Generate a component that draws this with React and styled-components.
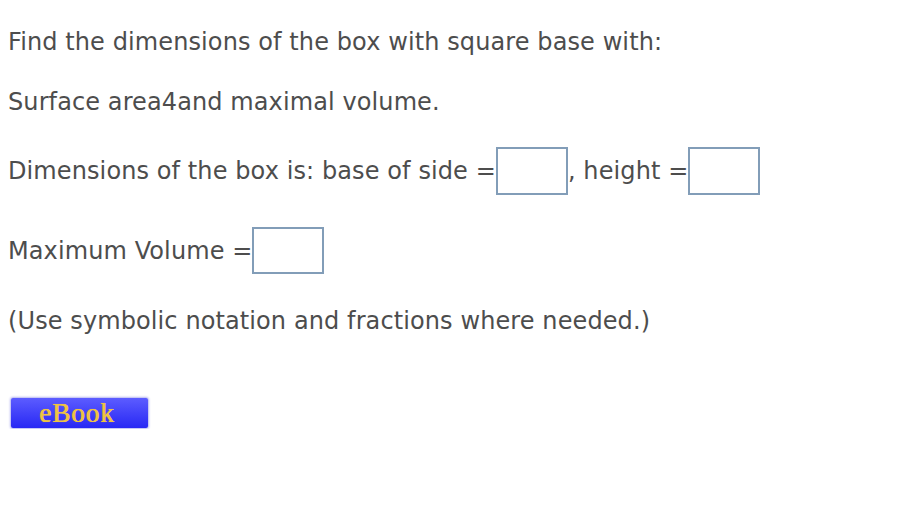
import React from 'react';
import styled, { createGlobalStyle } from 'styled-components';

const GlobalStyle = createGlobalStyle`
    body {
        margin: 0;
        background: #ffffff;
    }
`

const Page = styled.div`
    display: flex;
    flex-direction: column;
    align-items: flex-start;
    padding: 30px 0 0 8px;
    font-family: "DejaVu Sans", Verdana, sans-serif;
    font-size: 24px;
    letter-spacing: 0.1px;
    color: #4d4d4d;
`

const Line = styled.div`
    display: flex;
    align-items: center;
    line-height: 24px;
    margin-top: ${({mt}) => mt || '0'};
    white-space: pre;
`

const AnswerBox = styled.input`
    box-sizing: border-box;
    width: 72px;
    height: ${({h}) => h || '48px'};
    border: 2px solid #829db8;
    background: #fff;
    margin: 0;
    padding: 0 4px;
    font: inherit;
    outline: none;
`

const EBook = styled.button`
    margin: 64px 0 0 2px;
    width: 139px;
    height: 32px;
    border: 1px solid #c8c8f4;
    border-radius: 3px;
    background: linear-gradient(to bottom, #5c5cff, #2828f4);
    box-shadow: 0 0 2px rgba(80, 80, 220, 0.45);
    color: #ecc444;
    font-family: "Liberation Serif", "Times New Roman", serif;
    font-size: 27px;
    letter-spacing: 1px;
    text-shadow: 0 0 0.7px #ecc444, 0.4px 0 0 #ecc444;
    line-height: 28px;
    padding: 0 5px 0 0;
    cursor: pointer;
`

const App = () => {
    return (
        <>
            <GlobalStyle />
            <Page>
                <Line>Find the dimensions of the box with square base with:</Line>
                <Line mt={'36px'}>Surface area4and maximal volume.</Line>
                <Line mt={'33px'}>
                    Dimensions of the box is: base of side =<AnswerBox />, height =<AnswerBox />
                </Line>
                <Line mt={'32px'}>
                    Maximum Volume =<AnswerBox h={'47px'} />
                </Line>
                <Line mt={'35px'}>(Use symbolic notation and fractions where needed.)</Line>
                <EBook>eBook</EBook>
            </Page>
        </>
    )
}

export default App;
